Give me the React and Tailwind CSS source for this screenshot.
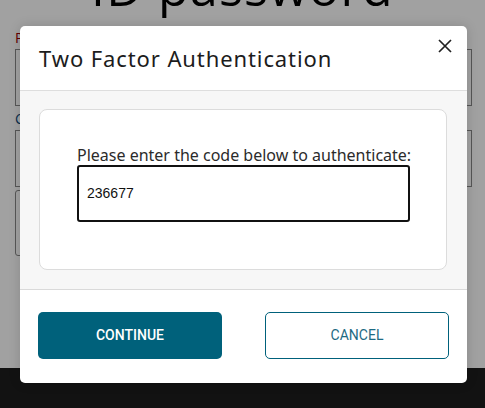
import React from 'react';

const sans = { fontFamily: '"Open Sans", sans-serif' };

const BackgroundPage = () => (
  <div className="min-h-[408px] bg-white flex flex-col font-['Open_Sans',sans-serif]">
    <h1 className="text-center text-[50px] leading-none -mt-[38px] text-black tracking-wide">ID password</h1>
    <div className="px-[15px] pt-[18px] flex flex-col">
      <label className="text-[14px] leading-[16px] text-[#9b0000]">Password</label>
      <div className="mt-[3px] h-[57px] mr-[-2px] border border-[#888]" />
      <label className="mt-[5px] text-[14px] leading-[16px] text-[#0d4a7a]">Confirm password</label>
      <div className="mt-[3px] h-[57px] mr-[-2px] border border-[#888]" />
      <div className="mt-[3px] h-[66px] w-[200px] border border-[#888] rounded-[3px]" />
    </div>
    <div className="mt-auto h-[40px] bg-[#1d1d1d]" />
  </div>
);

const TwoFactorModal = () => (
  <div className="absolute inset-0 bg-black/[0.37] flex items-center justify-center pl-[2px]">
    <div className="w-[447px] bg-white rounded-[5px] shadow-[0_0_12px_rgba(0,0,0,0.15)] overflow-hidden flex flex-col">
      <div className="h-[65px] flex items-start justify-between pl-[19px] pr-[12px] border-b border-[#dedede]">
        <h2 className="mt-[18px] text-[22px] leading-[28px] text-[#1c1c1c] font-['Noto_Sans',sans-serif] tracking-[0.9px]">
          Two Factor Authentication
        </h2>
        <button className="mt-[10px] w-[20px] h-[20px] flex items-center justify-center text-[#222]">
          <svg width="14" height="14" viewBox="0 0 14 14" fill="none" stroke="currentColor" strokeWidth="1.7">
            <path d="M1 1 L13 13 M13 1 L1 13" />
          </svg>
        </button>
      </div>
      <div className="bg-[#f7f7f7] pt-[18px] pb-[19px] pl-[19px] pr-[20px] border-b border-[#dadada]">
        <div className="h-[161px] bg-white border border-[#dcdcdc] rounded-[8px] pl-[37px] pt-[36px]">
          <p className="text-[16px] leading-[19px] text-[#2b2b2b] font-['Noto_Sans',sans-serif]">
            Please enter the code below to authenticate:
          </p>
          <div className="mt-[0px] w-[333px] h-[57px] border-2 border-[#111] rounded-[3px] flex items-center pl-[8px]">
            <span className="text-[14px] text-[#111] font-['Liberation_Sans',sans-serif]">236677</span>
          </div>
        </div>
      </div>
      <div className="flex justify-between px-[18px] pt-[22px] pb-[24px]">
        <button className="w-[184px] h-[47px] rounded-[5px] bg-[#00617b] text-white text-[14px] font-medium font-['Roboto',sans-serif]">
          CONTINUE
        </button>
        <button className="w-[184px] h-[47px] rounded-[5px] border border-[#00617b] bg-white text-[#1d6a83] text-[14px] font-['Roboto',sans-serif]">
          CANCEL
        </button>
      </div>
    </div>
  </div>
);

export default function App() {
  return (
    <div className="relative h-[408px] overflow-hidden" style={sans}>
      <BackgroundPage />
      <TwoFactorModal />
    </div>
  );
}
